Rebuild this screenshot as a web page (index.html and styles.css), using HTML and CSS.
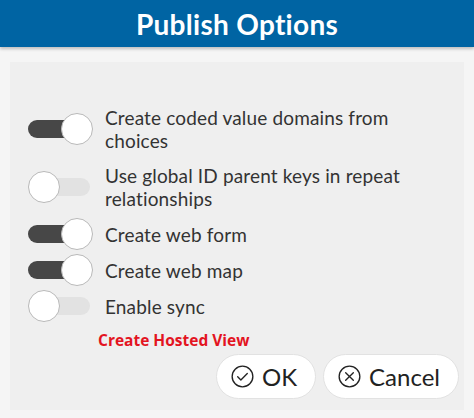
FILE: index.html
```html
<!DOCTYPE html>
<html>
<head>
<meta charset="utf-8">
<link rel="stylesheet" href="styles.css">
</head>
<body>
<div class="header"><h1 class="title">Publish Options</h1></div>
<div class="main">
  <div class="panel">
    <div class="options">
      <div class="row">
        <span class="toggle on"><span class="track"></span><span class="knob"></span></span>
        <span class="label">Create coded value domains from choices</span>
      </div>
      <div class="row">
        <span class="toggle off"><span class="track"></span><span class="knob"></span></span>
        <span class="label">Use global ID parent keys in repeat relationships</span>
      </div>
      <div class="row">
        <span class="toggle on"><span class="track"></span><span class="knob"></span></span>
        <span class="label">Create web form</span>
      </div>
      <div class="row">
        <span class="toggle on"><span class="track"></span><span class="knob"></span></span>
        <span class="label">Create web map</span>
      </div>
      <div class="row">
        <span class="toggle off"><span class="track"></span><span class="knob"></span></span>
        <span class="label">Enable sync</span>
      </div>
    </div>
    <div class="hosted">Create Hosted View</div>
    <div class="buttons">
      <button class="btn ok">
        <svg class="icon" viewBox="0 0 24 24" width="23" height="23"><circle cx="12" cy="12" r="10.8" fill="none" stroke="#222" stroke-width="1.4"/><path d="M7 12.3l3.3 3.3 6.7-6.8" fill="none" stroke="#222" stroke-width="1.4" stroke-linecap="round" stroke-linejoin="round"/></svg>
        <span>OK</span>
      </button>
      <button class="btn cancel">
        <svg class="icon" viewBox="0 0 24 24" width="23" height="23"><circle cx="12" cy="12" r="10.8" fill="none" stroke="#222" stroke-width="1.4"/><path d="M8 8l8 8M16 8l-8 8" fill="none" stroke="#222" stroke-width="1.4" stroke-linecap="round"/></svg>
        <span>Cancel</span>
      </button>
    </div>
  </div>
</div>
</body>
</html>
```
FILE: styles.css
```css
html, body {
  margin: 0;
  padding: 0;
  background: #f5f5f5;
  font-family: Lato, "Noto Sans", sans-serif;
}
.header {
  height: 47px;
  background: #0064a3;
  display: flex;
  align-items: center;
  justify-content: center;
  box-shadow: 0 2px 3px rgba(0,0,0,0.22);
  position: relative;
}
.title {
  margin: 0;
  color: #fff;
  font-size: 28px;
  font-weight: 700;
  letter-spacing: 0.3px;
}
.main {
  padding: 15px 10px 8px 10px;
}
.panel {
  background: #efefef;
  padding: 40px 5px 11px 18px;
}
.options {
  display: flex;
  flex-direction: column;
  gap: 4px;
}
.row {
  display: flex;
  align-items: center;
  gap: 12px;
  min-height: 32px;
}
.toggle {
  position: relative;
  flex: none;
  width: 65px;
  height: 32px;
}
.track {
  position: absolute;
  left: 0;
  right: 3px;
  top: 7px;
  height: 18px;
  border-radius: 9px;
}
.on .track { background: #474747; }
.off .track { background: #e2e2e2; }
.knob {
  position: absolute;
  top: 0;
  width: 30px;
  height: 30px;
  border-radius: 50%;
  background: #fff;
  border: 1px solid #b9b9b9;
}
.on .knob { right: 0; }
.off .knob { left: 0; }
.label {
  max-width: 342px;
  font-size: 19px;
  line-height: 23px;
  letter-spacing: 0.15px;
  padding: 4px 0;
  color: #333;
}
.hosted {
  margin: 8px 0 0 70px;
  color: #e3141f;
  font-family: "Open Sans", sans-serif;
  font-weight: 700;
  font-size: 15.5px;
  line-height: 20px;
}
.buttons {
  display: flex;
  justify-content: flex-end;
  gap: 7px;
  margin-top: 4px;
}
.btn {
  display: flex;
  align-items: center;
  gap: 8px;
  height: 45px;
  padding: 0 18px 0 14px;
  background: #fff;
  border: 1px solid #e2e2e2;
  border-radius: 23px;
  font-family: Lato, "Noto Sans", sans-serif;
  font-size: 24px;
  color: #222;
}
.icon { flex: none; }
```
